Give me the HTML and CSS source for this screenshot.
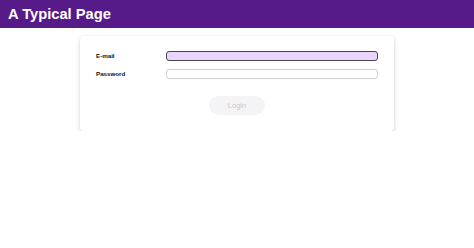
FILE: index.html
```html
<!DOCTYPE html>
<html>
<head>
<meta charset="utf-8">
<link rel="stylesheet" href="styles.css">
</head>
<body>
<header class="topbar"><h1 class="title">A Typical Page</h1></header>
<main class="main">
  <form class="card">
    <div class="fields">
      <label class="label" for="email">E-mail</label>
      <input class="input input-focus" id="email" type="text">
      <label class="label" for="pw">Password</label>
      <input class="input" id="pw" type="password">
    </div>
    <div class="actions">
      <button class="btn" type="button">Login</button>
    </div>
  </form>
</main>
</body>
</html>
```
FILE: styles.css
```css
html, body { margin: 0; padding: 0; background: #fff; }
body { font-family: "Liberation Sans", Arial, sans-serif; }
.topbar {
  height: 28px;
  background: #571a89;
  display: flex;
  align-items: center;
  padding-left: 8px;
  box-sizing: border-box;
}
.title {
  margin: 0;
  color: #fff;
  font-size: 14.7px;
  font-weight: bold;
  line-height: 1;
}
.main {
  display: flex;
  justify-content: center;
  padding-top: 8px;
}
.card {
  width: 314px;
  height: 95px;
  box-sizing: border-box;
  margin: 0;
  padding: 15px 16px 16px 16px;
  background: #fff;
  border-radius: 4px;
  box-shadow: 0 2px 5px rgba(0,0,0,0.16), 0 0 2px rgba(0,0,0,0.06);
  display: flex;
  flex-direction: column;
}
.fields {
  display: grid;
  grid-template-columns: 70px 1fr;
  row-gap: 8px;
  align-items: center;
}
.label {
  font-size: 6.2px;
  font-weight: bold;
  color: #111;
  line-height: 10px;
}
.input {
  height: 10px;
  box-sizing: border-box;
  border: 1px solid #cfcfcf;
  border-radius: 3px;
  background: #fff;
  margin: 0;
  padding: 0;
  width: 100%;
  outline: none;
}
.input-focus {
  background: #ead5fb;
  border: 1.5px solid #4a4458;
}
.actions {
  display: flex;
  justify-content: center;
  margin-top: 17px;
}
.btn {
  width: 56px;
  height: 19px;
  border: none;
  border-radius: 10px;
  background: #f4f4f6;
  color: #c9c9cc;
  font-family: "Liberation Sans", Arial, sans-serif;
  font-size: 7.5px;
  padding: 0;
}
```
